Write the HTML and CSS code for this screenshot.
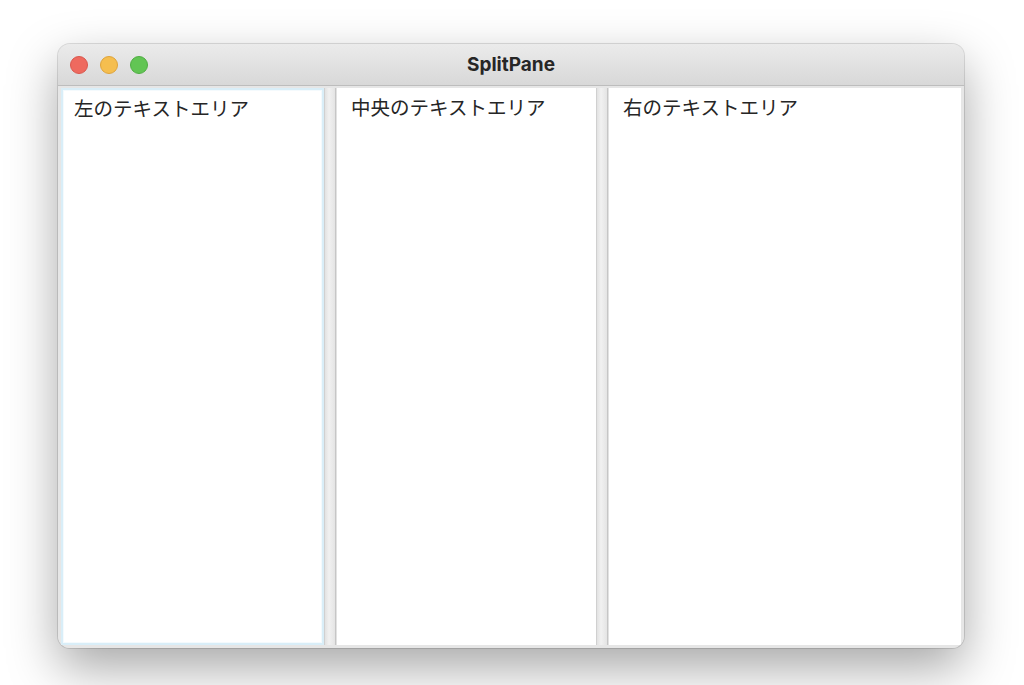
FILE: index.html
```html
<!DOCTYPE html>
<html lang="ja">
<head>
    <meta charset="UTF-8">
    <title>SplitPane</title>
    <link rel="stylesheet" href="styles.css">
</head>
<body>
    <div class="window">
        <div class="titlebar">
            <div class="lights">
                <span class="light red"></span>
                <span class="light yellow"></span>
                <span class="light green"></span>
            </div>
            <div class="title">SplitPane</div>
        </div>
        <div class="content">
            <div class="pane left focused">左のテキストエリア</div>
            <div class="divider"></div>
            <div class="pane middle">中央のテキストエリア</div>
            <div class="divider"></div>
            <div class="pane right">右のテキストエリア</div>
        </div>
    </div>
</body>
</html>
```
FILE: styles.css
```css
body {
    margin: 0;
    background-color: #ffffff;
    font-family: "Noto Sans CJK JP", "Noto Sans", sans-serif;
    height: 685px;
    overflow: hidden;
}

.window {
    margin: 44px 0 0 58px;
    width: 906px;
    height: 604px;
    border-radius: 12px;
    background-color: #e4e4e4;
    box-shadow: 0 0 0 1px rgba(0, 0, 0, 0.12), 0 20px 50px rgba(0, 0, 0, 0.35);
    display: flex;
    flex-direction: column;
    overflow: hidden;
}

.titlebar {
    height: 41px;
    background: linear-gradient(#ebebeb, #d8d8d8);
    border-bottom: 1px solid #bdbdbd;
    display: flex;
    align-items: center;
    position: relative;
}

.lights {
    display: flex;
    gap: 12px;
    padding-left: 12px;
}

.light {
    width: 18px;
    height: 18px;
    border-radius: 50%;
    box-sizing: border-box;
}

.red {
    background-color: #ee6a5f;
    border: 1px solid #d9574d;
}

.yellow {
    background-color: #f5be4f;
    border: 1px solid #dea33a;
}

.green {
    background-color: #62c554;
    border: 1px solid #4fad43;
}

.title {
    position: absolute;
    left: 0;
    right: 0;
    text-align: center;
    font-family: "Inter", "Liberation Sans", sans-serif;
    font-weight: bold;
    font-size: 19px;
    color: #262626;
}

.content {
    flex: 1;
    display: flex;
    padding: 2px 3px 3px 3px;
    background-color: #e6e6e6;
}

.pane {
    background-color: #ffffff;
    font-size: 19.5px;
    color: #262626;
    padding: 4px 14px;
    box-sizing: border-box;
    border-left: 1px solid #e2e2e2;
}

.left {
    width: 263px;
    border: 2px solid #d9eef8;
    box-shadow: inset 0 0 0 1px #f4fafd;
    padding: 3px 11px;
}

.middle {
    width: 260px;
}

.right {
    flex: 1;
}

.divider {
    width: 10px;
    border-left: 1px solid #d0d0d0;
    border-right: 1px solid #c6c6c6;
    background: linear-gradient(to right, #e2e2e2, #f1f1f1 40%, #e4e4e4);
}
```
